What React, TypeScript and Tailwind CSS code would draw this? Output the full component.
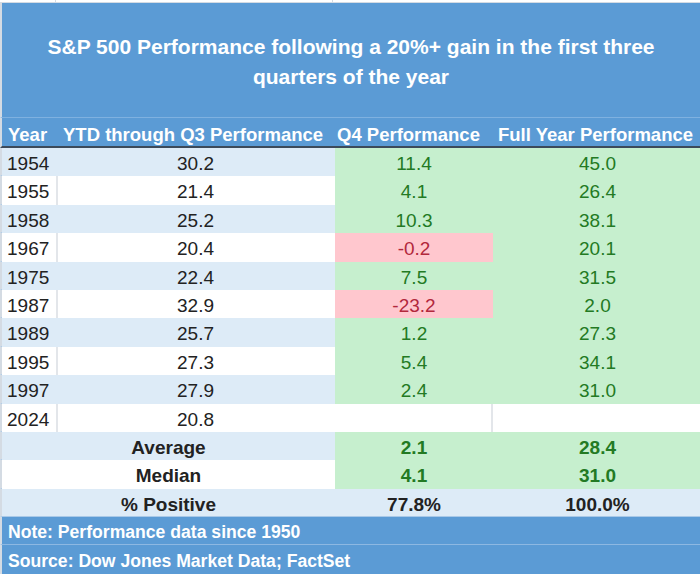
import React from "react";

type Row = {
  year: string;
  ytd: string;
  q4: string;
  full: string;
};

const rows: Row[] = [
  { year: "1954", ytd: "30.2", q4: "11.4", full: "45.0" },
  { year: "1955", ytd: "21.4", q4: "4.1", full: "26.4" },
  { year: "1958", ytd: "25.2", q4: "10.3", full: "38.1" },
  { year: "1967", ytd: "20.4", q4: "-0.2", full: "20.1" },
  { year: "1975", ytd: "22.4", q4: "7.5", full: "31.5" },
  { year: "1987", ytd: "32.9", q4: "-23.2", full: "2.0" },
  { year: "1989", ytd: "25.7", q4: "1.2", full: "27.3" },
  { year: "1995", ytd: "27.3", q4: "5.4", full: "34.1" },
  { year: "1997", ytd: "27.9", q4: "2.4", full: "31.0" },
  { year: "2024", ytd: "20.8", q4: "", full: "" },
];

const font = { fontFamily: '"Liberation Sans", Arial, sans-serif' };

function valueCell(v: string, extra = "") {
  if (v === "") return <div className={`bg-white ${extra}`} />;
  const neg = v.startsWith("-");
  return (
    <div
      className={`flex items-center justify-center pt-[2px] ${
        neg ? "bg-[#ffc7ce] text-[#b2283c]" : "bg-[#c6efce] text-[#237a23]"
      } ${extra}`}
    >
      {v}
    </div>
  );
}

export default function App() {
  return (
    <div
      className="w-[700px] h-[574px] bg-white text-[19px] text-[#222] overflow-hidden flex flex-col"
      style={font}
    >
      {/* top gridline strip */}
      <div className="h-[3px] border-b border-[#d4dbe3] flex">
        <div className="w-[56px] border-r border-[#d4dbe3]" />
        <div className="w-[277px] border-r border-[#d4dbe3]" />
      </div>

      {/* Title */}
      <div className="h-[114px] bg-[#5b9bd5] flex items-center justify-center text-center text-white font-bold text-[21px] leading-[30px] pt-1 border-l-2 border-[#d4dbe3]">
        <p>
          S&amp;P 500 Performance following a 20%+ gain in the first three
          <br />
          quarters of the year
        </p>
      </div>

      {/* Header row */}
      <div className="h-[31px] pt-[3px] bg-[#5b9bd5] border-t border-[#7fb1e0] border-b-2 border-b-[#3c4a5a] grid grid-cols-[56px_277px_158px_209px] text-white font-bold text-[18.5px] items-center border-l-2 border-l-[#d4dbe3] whitespace-nowrap">
        <div className="pl-[6px]">Year</div>
        <div className="pl-[5px]">YTD through Q3 Performance</div>
        <div className="pl-[2px]">Q4 Performance</div>
        <div className="pl-[5px]">Full Year Performance</div>
      </div>

      {/* Data rows */}
      {rows.map((r, i) => {
        const blue = i % 2 === 0;
        const bg = blue ? "bg-[#ddebf7]" : "bg-white";
        const sep = blue ? "" : "border-r-2 border-[#e3e6ea]";
        return (
          <div
            key={r.year}
            className="h-[28.4px] grid grid-cols-[56px_277px_158px_209px] border-b border-[#a9c9e8] border-l-2 border-l-[#d4dbe3]"
          >
            <div className={`${bg} ${sep} flex items-center pl-[5px] pt-[2px]`}>{r.year}</div>
            <div className={`${bg} flex items-center justify-center pr-[2px] pt-[2px]`}>{r.ytd}</div>
            {valueCell(r.q4, r.q4 === "" ? "border-r-2 border-[#e3e6ea]" : "")}
            {valueCell(r.full)}
          </div>
        );
      })}

      {/* Summary rows */}
      <div className="h-[28.4px] grid grid-cols-[333px_158px_209px] border-b border-[#a9c9e8] font-bold border-l-2 border-l-[#d4dbe3]">
        <div className="bg-[#ddebf7] flex items-center justify-center pt-[2px]">Average</div>
        <div className="bg-[#c6efce] text-[#237a23] flex items-center justify-center pt-[2px]">2.1</div>
        <div className="bg-[#c6efce] text-[#237a23] flex items-center justify-center pt-[2px]">28.4</div>
      </div>
      <div className="h-[28.4px] grid grid-cols-[333px_158px_209px] border-b border-[#a9c9e8] font-bold border-l-2 border-l-[#d4dbe3]">
        <div className="bg-white flex items-center justify-center pt-[2px]">Median</div>
        <div className="bg-[#c6efce] text-[#237a23] flex items-center justify-center pt-[2px]">4.1</div>
        <div className="bg-[#c6efce] text-[#237a23] flex items-center justify-center pt-[2px]">31.0</div>
      </div>
      <div className="h-[28.4px] grid grid-cols-[333px_158px_209px] bg-[#ddebf7] border-b border-[#a9c9e8] font-bold border-l-2 border-l-[#d4dbe3]">
        <div className="flex items-center justify-center pt-[2px]">% Positive</div>
        <div className="flex items-center justify-center pt-[2px]">77.8%</div>
        <div className="flex items-center justify-center pt-[2px]">100.0%</div>
      </div>

      {/* Footer notes */}
      <div className="h-[28.4px] bg-[#5b9bd5] text-white font-bold text-[17.6px] flex items-center pl-[6px] pt-[2px] border-b border-[#8db8e2] border-l-2 border-l-[#d4dbe3]">
        Note: Performance data since 1950
      </div>
      <div className="flex-1 bg-[#5b9bd5] text-white font-bold text-[17.6px] flex items-center pl-[6px] pt-[2px] border-l-2 border-l-[#d4dbe3]">
        Source: Dow Jones Market Data; FactSet
      </div>
    </div>
  );
}
